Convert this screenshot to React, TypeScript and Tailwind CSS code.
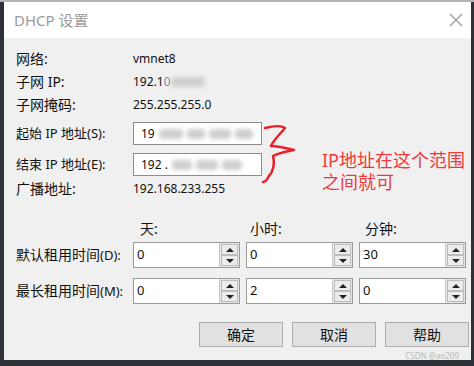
const font = { fontFamily: '"Noto Sans", "Noto Sans CJK SC", sans-serif' }

function Spin({ value }: { value: string }) {
  return (
    <div className="flex h-[26px] w-[107px] border border-[#9a9a9a] bg-white">
      <div className="flex flex-1 items-center pl-[3px] text-[13px] text-[#111]">{value}</div>
      <div className="flex w-[20px] flex-col border-l border-[#c8c8c8] bg-[#e6e6e6] p-[1px]">
        <div className="flex flex-1 items-center justify-center border border-[#bdbdbd] bg-[#ececec]">
          <span className="h-0 w-0 border-x-[4px] border-b-[4px] border-x-transparent border-b-[#222]" />
        </div>
        <div className="flex flex-1 items-center justify-center border border-[#bdbdbd] bg-[#ececec]">
          <span className="h-0 w-0 border-x-[4px] border-t-[4px] border-x-transparent border-t-[#222]" />
        </div>
      </div>
    </div>
  )
}

function Blur({ w }: { w: number }) {
  return <span className="inline-block h-[10px] rounded-sm bg-[#cfcfcf] blur-[2px]" style={{ width: w }} />
}

export default function App() {
  return (
    <div className="flex h-[366px] w-[474px] flex-col overflow-hidden bg-[#2e3137]" style={font}>
      <div className="h-[2px] bg-[#b4b4b4]" />
      <div className="relative ml-[4px] mr-[3px] mb-[6px] flex flex-1 flex-col">
        <div className="flex h-[36px] items-center justify-between bg-white pl-[10px] pr-[8px]">
          <span className="text-[15px] text-[#9b9b9b]">DHCP 设置</span>
          <svg width="14" height="14" viewBox="0 0 14 14" className="text-[#9b9b9b]">
            <path d="M1 1 L13 13 M13 1 L1 13" stroke="currentColor" strokeWidth="1.2" />
          </svg>
        </div>

        <div className="flex flex-1 flex-col bg-[#f0f0f0] pl-[12px] pt-[9px] text-[13px] text-[#111]">
          <div className="flex h-[23px] items-center">
            <span className="w-[117px] text-[14px]">网络:</span>
            <span className="text-[12px]">vmnet8</span>
          </div>
          <div className="flex h-[23px] items-center">
            <span className="w-[117px] text-[14px]">子网 IP:</span>
            <span className="flex items-center text-[12px]">192.1<span className="opacity-50">0</span><Blur w={34} /></span>
          </div>
          <div className="flex h-[23px] items-center">
            <span className="w-[117px] text-[14px]">子网掩码:</span>
            <span className="text-[12px]">255.255.255.0</span>
          </div>

          <div className="mt-[6px] flex h-[23px] items-center">
            <span className="w-[117px]">起始 IP 地址(S):</span>
            <div className="flex h-[23px] w-[129px] items-center gap-[4px] border border-[#8c8c8c] bg-white pl-[7px] text-[12px]">
              19<Blur w={24} /><Blur w={18} /><Blur w={22} /><Blur w={18} />
            </div>
          </div>
          <div className="mt-[8px] flex h-[23px] items-center">
            <span className="w-[117px]">结束 IP 地址(E):</span>
            <div className="flex h-[23px] w-[129px] items-center gap-[4px] border border-[#8c8c8c] bg-white pl-[7px] text-[12px]">
              192 .<Blur w={20} /><Blur w={22} /><Blur w={20} />
            </div>
          </div>
          <div className="mt-[1px] flex h-[23px] items-center">
            <span className="w-[117px] text-[14px]">广播地址:</span>
            <span className="text-[12px]">192.168.233.255</span>
          </div>

          <div className="mt-[18px] flex h-[20px] items-center pl-[124px] text-[14px]">
            <span className="w-[110px]">天:</span>
            <span className="w-[115px]">小时:</span>
            <span>分钟:</span>
          </div>
          <div className="mt-[4px] flex items-center">
            <span className="w-[117px] text-[14px]">默认租用时间<span className="text-[13px]">(D):</span></span>
            <div className="flex gap-[6px]">
              <Spin value="0" />
              <Spin value="0" />
              <Spin value="30" />
            </div>
          </div>
          <div className="mt-[10px] flex items-center">
            <span className="w-[117px] text-[14px]">最长租用时间<span className="text-[13px]">(M):</span></span>
            <div className="flex gap-[6px]">
              <Spin value="0" />
              <Spin value="2" />
              <Spin value="0" />
            </div>
          </div>

          <div className="mt-[18px] flex justify-end gap-[9px] pr-[2px]">
            {['确定', '取消', '帮助'].map((t) => (
              <button key={t} className="h-[25px] w-[84px] border border-[#adadad] bg-[#e1e1e1] text-[14px] text-[#111]">
                {t}
              </button>
            ))}
          </div>
          <div className="mt-[5px] pr-[12px] text-right text-[8px] leading-none text-[#b8b8b8]">CSDN @ao209</div>
        </div>

        {/* red annotation */}
        <svg className="absolute left-[256px] top-[121px]" width="42" height="64" viewBox="0 0 42 64">
          <path
            d="M5 5 C13 3 21 2 25 5 C19 12 13 18 11 23 C17 23 26 25 34 27 C25 29 19 30 13 33 C15 41 13 49 9 53 C7 57 5 59 3 59"
            fill="none"
            stroke="#e8202a"
            strokeWidth="2.5"
            strokeLinecap="round"
            strokeLinejoin="round"
          />
        </svg>
        <div className="absolute left-[318px] top-[147px] text-[18px] leading-[22px] text-[#ee3a3a]">
          IP地址在这个范围
          <br />
          之间就可
        </div>
      </div>
    </div>
  )
}
